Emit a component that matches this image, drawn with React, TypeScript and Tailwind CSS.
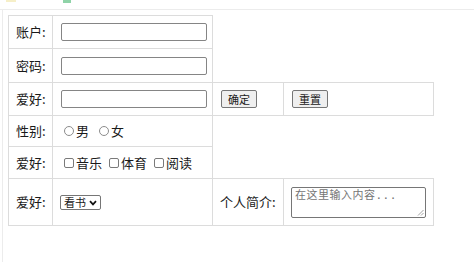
import React from 'react';

const cell = 'border border-[#dcdcdc] pl-[7px] pr-0 align-middle whitespace-nowrap leading-[16px]';

const Radio: React.FC<{ label: string }> = ({ label }) => (
  <span className="inline-flex items-center mr-[6px]">
    <span className="inline-block w-[10px] h-[10px] rounded-full border border-[#8c8c8c] bg-white ml-[4px] mr-[2px]"></span>
    <span>{label}</span>
  </span>
);

const Check: React.FC<{ label: string }> = ({ label }) => (
  <span className="inline-flex items-center mr-[3px]">
    <span className="inline-block w-[10px] h-[10px] rounded-[2px] border border-[#7a7a7a] bg-white ml-[4px] mr-[2px]"></span>
    <span>{label}</span>
  </span>
);

const Btn: React.FC<{ label: string }> = ({ label }) => (
  <span className="inline-flex items-center justify-center w-[36px] h-[18px] bg-[#efefef] border border-[#767676] rounded-[2px] text-[11px] leading-none ml-[1px]">
    {label}
  </span>
);

const TextInput = () => (
  <input
    type="text"
    className="block w-[146px] h-[18px] ml-[1px] border border-[#858585] rounded-[2px] bg-white outline-none"
  />
);

export default function App() {
  return (
    <div className="w-[474px] h-[262px] bg-white overflow-hidden text-[13px] text-[#1a1a1a] font-['Noto_Sans_CJK_SC','Microsoft_YaHei',sans-serif]">
      {/* browser chrome remnant */}
      <div className="h-[10px] border-b border-[#ececec] relative">
        <span className="absolute left-[6px] top-0 w-[10px] h-[2px] bg-[#f6efc8]"></span>
        <span className="absolute left-[63px] top-0 w-[8px] h-[3px] bg-[#8fd3a8]"></span>
      </div>
      <div className="ml-[2px] h-[252px] border-l border-[#ececec] pl-[5px] pt-[5px]">
        <table className="table-fixed border-collapse w-[425px]">
          <colgroup>
            <col className="w-[44px]" />
            <col className="w-[160px]" />
            <col className="w-[71px]" />
            <col className="w-[150px]" />
          </colgroup>
          <tbody>
            <tr className="h-[33px]">
              <td className={cell}>账户:</td>
              <td className={cell}><TextInput /></td>
            </tr>
            <tr className="h-[34px]">
              <td className={cell}>密码:</td>
              <td className={cell}><TextInput /></td>
            </tr>
            <tr className="h-[33px]">
              <td className={cell}>爱好:</td>
              <td className={cell}><TextInput /></td>
              <td className={cell}><Btn label="确定" /></td>
              <td className={cell}><Btn label="重置" /></td>
            </tr>
            <tr className="h-[31px]">
              <td className={cell}>性别:</td>
              <td className={cell}>
                <Radio label="男" />
                <Radio label="女" />
              </td>
            </tr>
            <tr className="h-[32px]">
              <td className={cell}>爱好:</td>
              <td className={cell}>
                <Check label="音乐" />
                <Check label="体育" />
                <Check label="阅读" />
              </td>
            </tr>
            <tr className="h-[47px]">
              <td className={cell}>爱好:</td>
              <td className={cell}>
                <span className="inline-flex items-center h-[15px] px-[3px] border border-[#767676] rounded-[2px] text-[11px] leading-none bg-white">
                  看书
                  <svg className="ml-[3px]" width="8" height="6" viewBox="0 0 8 6">
                    <path d="M1 1.2 L4 4.4 L7 1.2" fill="none" stroke="#111" strokeWidth="1.7" />
                  </svg>
                </span>
              </td>
              <td className={cell}>个人简介:</td>
              <td className={cell}>
                <div className="relative w-[135px] h-[31px] border border-[#767676] rounded-[2px] bg-white">
                  <span className="absolute left-[3px] top-[1px] text-[11px] leading-[14px] tracking-[0.5px] text-[#757575] font-['DejaVu_Sans_Mono','Noto_Sans_CJK_SC',monospace]">
                    在这里输入内容...
                  </span>
                  <svg className="absolute right-[1px] bottom-[1px]" width="7" height="7" viewBox="0 0 7 7">
                    <path d="M6.5 1 L1 6.5 M6.5 4 L4 6.5" stroke="#8a8a8a" strokeWidth="0.8" />
                  </svg>
                </div>
              </td>
            </tr>
          </tbody>
        </table>
      </div>
    </div>
  );
}
